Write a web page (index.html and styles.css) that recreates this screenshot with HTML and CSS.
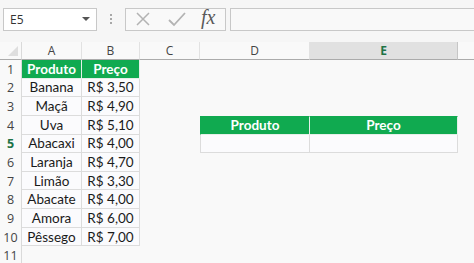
FILE: index.html
```html
<!DOCTYPE html>
<html>
<head>
  <title>Planilha</title>
  <link rel="stylesheet" href="styles.css">
</head>
<body>
  <div class="toolbar">
    <div class="name-box">
      <span>E5</span>
      <span class="caret"></span>
    </div>
    <div class="grip"><i></i><i></i><i></i></div>
    <div class="fx-box">
      <svg class="icon" width="16" height="16" viewBox="0 0 16 16">
        <path d="M2 2 L14 14 M14 2 L2 14" stroke="#b3b3b3" stroke-width="1.5" fill="none"/>
      </svg>
      <svg class="icon" width="20" height="16" viewBox="0 0 20 16">
        <path d="M2 9 L7 14 L18 2" stroke="#b3b3b3" stroke-width="1.8" fill="none"/>
      </svg>
      <span class="fx">fx</span>
    </div>
    <div class="formula"></div>
  </div>

  <div class="sheet">
    <!-- column headers -->
    <div class="corner"><span class="tri"></span></div>
    <div class="col-head">A</div>
    <div class="col-head">B</div>
    <div class="col-head">C</div>
    <div class="col-head">D</div>
    <div class="col-head active">E</div>
    <div class="col-head last"></div>

    <div class="row-head">1</div>
    <div class="cell head left">Produto</div>
    <div class="cell head">Preço</div>
    <div></div><div></div><div></div><div></div>

    <div class="row-head">2</div>
    <div class="cell left">Banana</div>
    <div class="cell">R$ 3,50</div>
    <div></div><div></div><div></div><div></div>

    <div class="row-head">3</div>
    <div class="cell left">Maçã</div>
    <div class="cell">R$ 4,90</div>
    <div></div><div></div><div></div><div></div>

    <div class="row-head">4</div>
    <div class="cell left">Uva</div>
    <div class="cell">R$ 5,10</div>
    <div></div>
    <div class="cell head edge top">Produto</div>
    <div class="cell head top">Preço</div>
    <div></div>

    <div class="row-head active">5</div>
    <div class="cell left">Abacaxi</div>
    <div class="cell">R$ 4,00</div>
    <div></div>
    <div class="cell edge"></div>
    <div class="cell"></div>
    <div></div>

    <div class="row-head">6</div>
    <div class="cell left">Laranja</div>
    <div class="cell">R$ 4,70</div>
    <div></div><div></div><div></div><div></div>

    <div class="row-head">7</div>
    <div class="cell left">Limão</div>
    <div class="cell">R$ 3,30</div>
    <div></div><div></div><div></div><div></div>

    <div class="row-head">8</div>
    <div class="cell left">Abacate</div>
    <div class="cell">R$ 4,00</div>
    <div></div><div></div><div></div><div></div>

    <div class="row-head">9</div>
    <div class="cell left">Amora</div>
    <div class="cell">R$ 6,00</div>
    <div></div><div></div><div></div><div></div>

    <div class="row-head">10</div>
    <div class="cell left">Pêssego</div>
    <div class="cell">R$ 7,00</div>
    <div></div><div></div><div></div><div></div>

    <div class="row-head">11</div>
    <div></div><div></div><div></div><div></div><div></div><div></div>
  </div>
</body>
</html>
```

FILE: styles.css
```css
body {
  margin: 0;
  width: 474px;
  height: 263px;
  overflow: hidden;
  background-color: #f9f9f9;
  font-family: Lato, "Open Sans", sans-serif;
  color: #222;
}

.toolbar {
  display: flex;
  align-items: center;
  height: 42px;
  padding-left: 3px;
  background-color: #f6f6f6;
  box-sizing: border-box;
  padding-bottom: 4px;
}

.name-box {
  display: flex;
  align-items: center;
  justify-content: space-between;
  width: 94px;
  height: 23px;
  box-sizing: border-box;
  padding: 0 5px 0 6px;
  background: #fff;
  border: 1px solid #c8c8c8;
  font-family: "Open Sans", sans-serif;
  font-size: 12px;
  color: #333;
}

.caret {
  width: 0;
  height: 0;
  border-left: 4px solid transparent;
  border-right: 4px solid transparent;
  border-top: 4px solid #555;
  margin-right: 1px;
}

.grip {
  display: flex;
  flex-direction: column;
  gap: 2px;
  margin: 0 13px 0 13px;
}

.grip i {
  display: block;
  width: 2px;
  height: 2px;
  background: #a8a8a8;
}

.fx-box {
  display: flex;
  align-items: center;
  width: 101px;
  height: 23px;
  box-sizing: border-box;
  border: 1px solid #c8c8c8;
  background: #f9f9f9;
  padding-left: 9px;
}

.icon {
  margin-right: 16px;
}

.fx {
  font-family: "Liberation Serif", serif;
  font-style: italic;
  font-size: 20px;
  color: #5a5a5a;
  margin-left: -2px;
  margin-top: -3px;
}

.formula {
  flex: 1;
  height: 23px;
  margin-left: 4px;
  box-sizing: border-box;
  border: 1px solid #c8c8c8;
  border-right: none;
  background: #f9f9f9;
}

.sheet {
  display: grid;
  grid-template-columns: 22px 60px 58px 60px 110px 148px 1fr;
  grid-template-rows: 18px repeat(11, 18.65px);
  font-size: 13.5px;
}

.sheet > div {
  box-sizing: border-box;
  display: flex;
  align-items: center;
  justify-content: center;
}

.corner {
  border-bottom: 1px solid #ababab;
  border-right: 1px solid #dadada;
  position: relative;
}

.tri {
  position: absolute;
  right: 3px;
  bottom: 3px;
  width: 0;
  height: 0;
  border-left: 10px solid transparent;
  border-bottom: 10px solid #dedede;
}

.col-head {
  font-family: "Open Sans", sans-serif;
  font-size: 12px;
  color: #444;
  border-bottom: 1px solid #ababab;
  border-right: 1px solid #e2e2e2;
}

.col-head.active {
  background: #e1e1e1;
  color: #217346;
  font-weight: bold;
  border-right: 1px solid #c6c6c6;
}

.col-head.last {
  border-right: none;
}

.row-head {
  font-family: "Open Sans", sans-serif;
  font-size: 12.5px;
  color: #444;
  border-right: 1px solid #dadada;
}

.row-head.active {
  color: #217346;
  font-weight: bold;
}

.cell {
  background: #fbfbfd;
  border-right: 1px solid #dcdcdc;
  border-bottom: 1px solid #dcdcdc;
  color: #1a1a1a;
}

.cell.edge {
  border-left: 1px solid #dcdcdc;
}

.cell.top {
  border-top: 1px solid #dcdcdc;
}

.cell.head {
  background: #10aa50;
  color: #fff;
  font-weight: bold;
  border-right-color: #e6efe9;
  border-bottom-color: #e6efe9;
}

.cell.head.top {
  border-top-color: #10aa50;
}

.cell.head.edge {
  border-left-color: #10aa50;
}
```
